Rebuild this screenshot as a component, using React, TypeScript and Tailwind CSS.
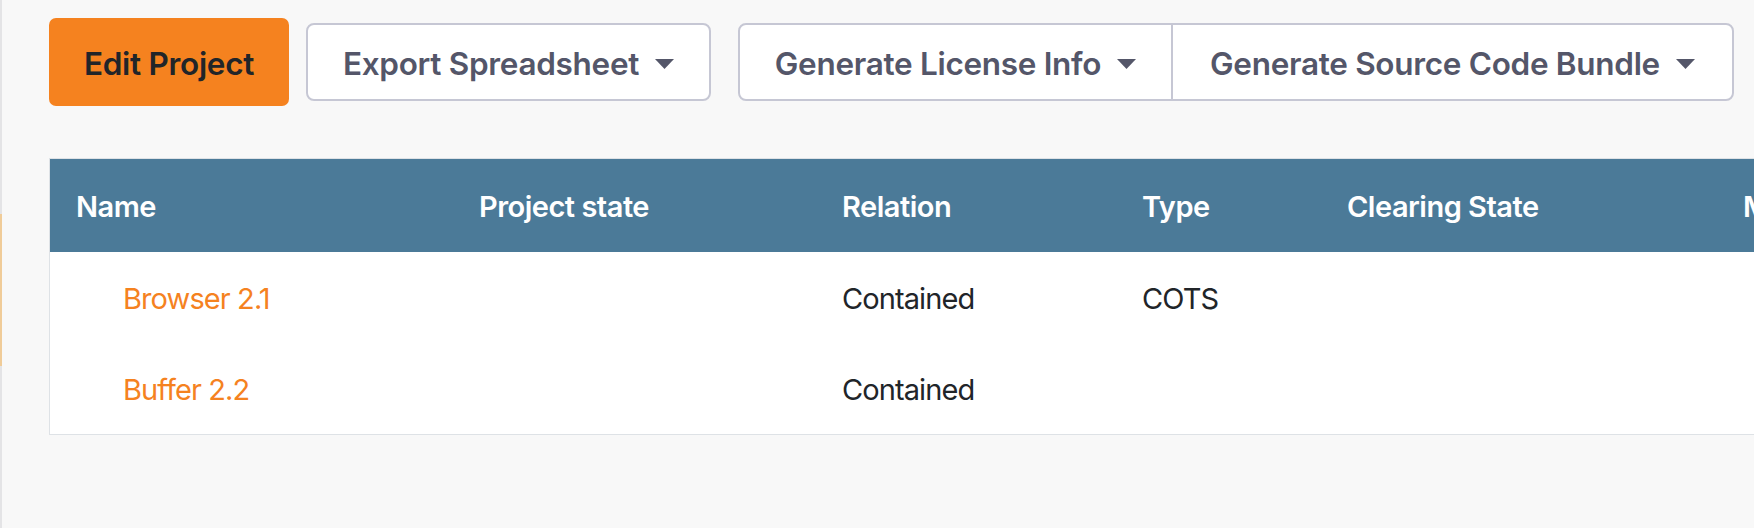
const Caret = () => (
  <svg width="19" height="10" viewBox="0 0 19 10" className="shrink-0">
    <path d="M0 0h19L9.5 10z" fill="#545669" />
  </svg>
);

const headers = [
  { label: "Name", w: "w-[403px]" },
  { label: "Project state", w: "w-[363px]" },
  { label: "Relation", w: "w-[300px]" },
  { label: "Type", w: "w-[205px]" },
  { label: "Clearing State", w: "w-[396px]" },
  { label: "Main Licenses", w: "w-[400px]" },
];

const rows = [
  { name: "Browser 2.1", relation: "Contained", type: "COTS" },
  { name: "Buffer 2.2", relation: "Contained", type: "" },
];

export default function App() {
  return (
    <div
      className="flex h-[528px] w-full overflow-hidden bg-[#f8f8f8] text-[#212529]"
      style={{ fontFamily: "Inter, 'Noto Sans', sans-serif" }}
    >
      <div className="flex w-[2px] shrink-0 flex-col bg-[#e4e4e6]">
        <div className="mt-[214px] h-[152px] bg-[#f0cc99]" />
      </div>

      <div className="flex min-w-0 flex-1 flex-col pl-[47px] pt-[18px]">
        <div className="flex items-center text-[31.5px] font-semibold tracking-[-0.3px]">
          <button className="flex h-[88px] w-[240px] items-center justify-center rounded-[7px] bg-[#f5821f] pt-[3px] text-[#212529]">
            Edit Project
          </button>
          <button className="ml-[17px] flex h-[78px] w-[405px] items-center justify-center gap-[16px] rounded-[8px] border-2 border-[#c6c7d4] bg-white pt-[3px] text-[#545669]">
            Export Spreadsheet
            <Caret />
          </button>
          <div className="ml-[27px] flex h-[78px] w-[996px] rounded-[8px] border-2 border-[#c6c7d4] bg-white text-[#545669]">
            <button className="flex w-[433px] items-center justify-center gap-[16px] border-r-2 border-[#c6c7d4] pt-[3px]">
              Generate License Info
              <Caret />
            </button>
            <button className="flex flex-1 items-center justify-center gap-[16px] pt-[3px]">
              Generate Source Code Bundle
              <Caret />
            </button>
          </div>
        </div>

        <div className="mt-[52px] w-[2100px] border-b border-l border-t border-[#dee2e6] bg-white text-[29px]">
          <div className="flex h-[93px] items-center bg-[#4b7a98] pt-[2px] font-semibold tracking-[-0.5px] text-white">
            {headers.map((h) => (
              <div key={h.label} className={`${h.w} shrink-0 whitespace-nowrap pl-[26px]`}>
                {h.label}
              </div>
            ))}
          </div>
          {rows.map((r) => (
            <div key={r.name} className="flex h-[91px] items-center pt-[3px] tracking-[-0.9px]">
              <div className="w-[403px] shrink-0 pl-[73px] text-[#f5821f]">{r.name}</div>
              <div className="w-[363px] shrink-0" />
              <div className="w-[300px] shrink-0 pl-[26px]">{r.relation}</div>
              <div className="w-[205px] shrink-0 pl-[26px]">{r.type}</div>
            </div>
          ))}
        </div>
      </div>
    </div>
  );
}
